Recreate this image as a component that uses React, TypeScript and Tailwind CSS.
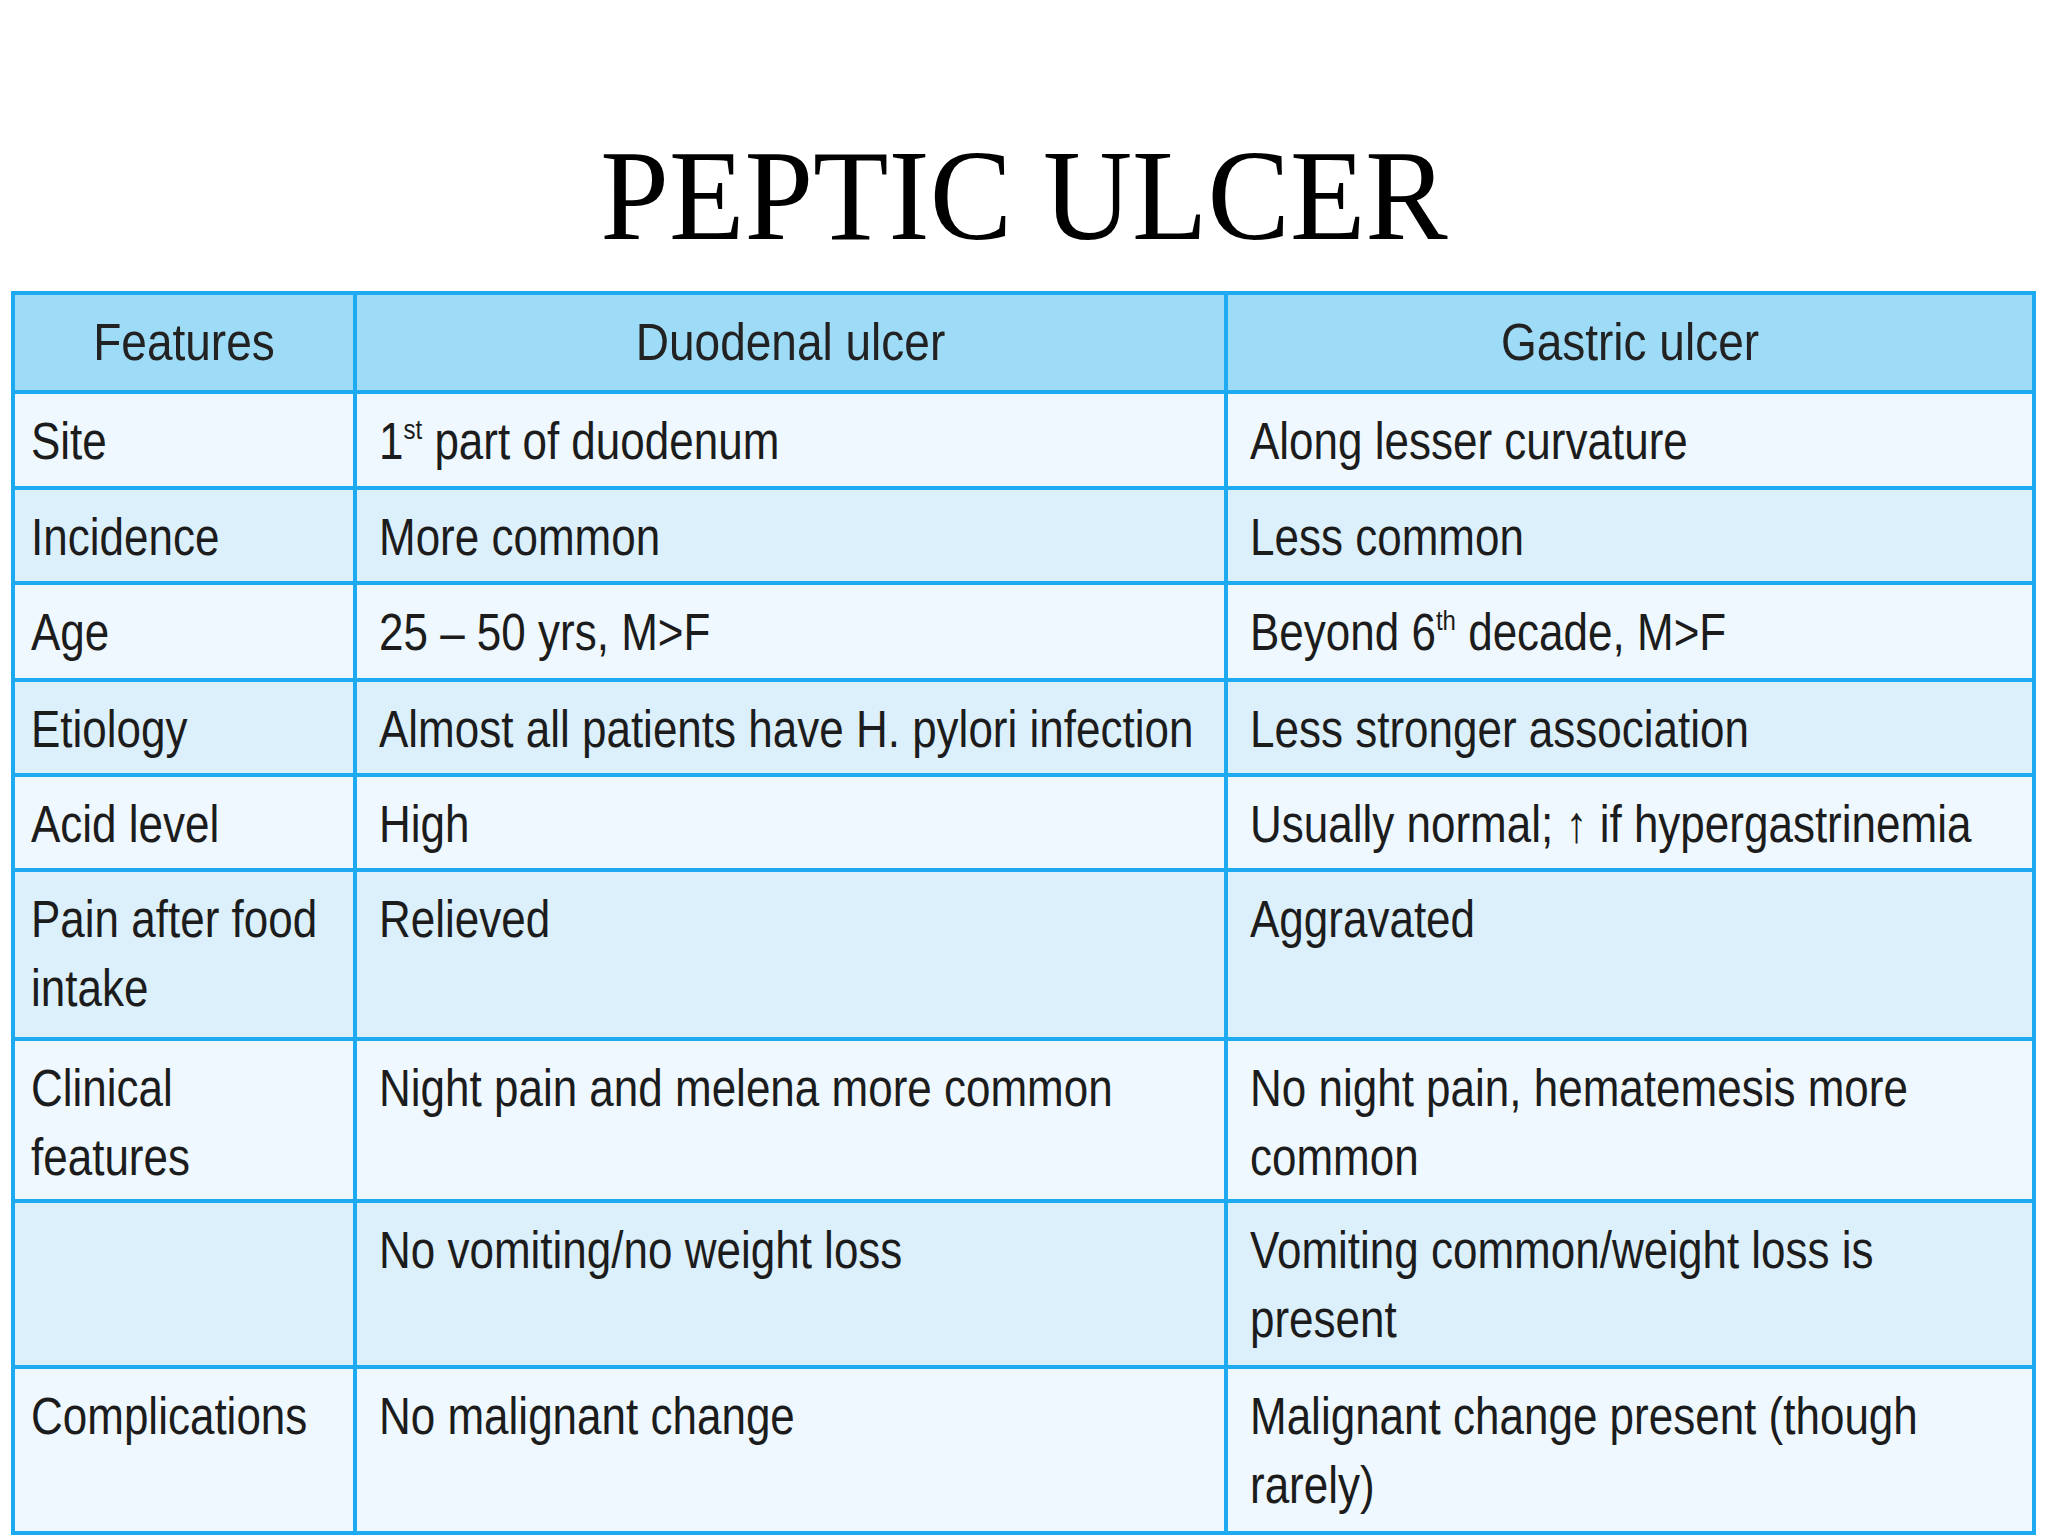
const sup = 'text-[24px] -top-[17px]'

const rows: { feature: string; duodenal: React.ReactNode; gastric: React.ReactNode; h: string; bg: string }[] = [
  {
    feature: 'Site',
    duodenal: (
      <>
        1<sup className={sup}>st</sup> part of duodenum
      </>
    ),
    gastric: 'Along lesser curvature',
    h: 'h-[96px]',
    bg: 'bg-[#eef8fe]',
  },
  { feature: 'Incidence', duodenal: 'More common', gastric: 'Less common', h: 'h-[95px]', bg: 'bg-[#dcf0fb]' },
  {
    feature: 'Age',
    duodenal: '25 – 50 yrs, M>F',
    gastric: (
      <>
        Beyond 6<sup className={sup}>th</sup> decade, M&gt;F
      </>
    ),
    h: 'h-[97px]',
    bg: 'bg-[#eef8fe]',
  },
  {
    feature: 'Etiology',
    duodenal: 'Almost all patients have H. pylori infection',
    gastric: 'Less stronger association',
    h: 'h-[95px]',
    bg: 'bg-[#dcf0fb]',
  },
  {
    feature: 'Acid level',
    duodenal: 'High',
    gastric: 'Usually normal; ↑ if hypergastrinemia',
    h: 'h-[95px]',
    bg: 'bg-[#eef8fe]',
  },
  { feature: 'Pain after food intake', duodenal: 'Relieved', gastric: 'Aggravated', h: 'h-[169px]', bg: 'bg-[#dcf0fb]' },
  {
    feature: 'Clinical features',
    duodenal: 'Night pain and melena more common',
    gastric: 'No night pain, hematemesis more common',
    h: 'h-[162px]',
    bg: 'bg-[#eef8fe]',
  },
  {
    feature: '',
    duodenal: 'No vomiting/no weight loss',
    gastric: 'Vomiting common/weight loss is present',
    h: 'h-[166px]',
    bg: 'bg-[#dcf0fb]',
  },
  {
    feature: 'Complications',
    duodenal: 'No malignant change',
    gastric: 'Malignant change present (though rarely)',
    h: 'h-[166px]',
    bg: 'bg-[#eef8fe]',
  },
]

export default function App() {
  const cell = 'border-[4px] border-[#1eaaf1] align-top pt-[12px] text-left'
  const head = 'border-[4px] border-[#1eaaf1] font-normal text-center align-middle text-[46px] text-[#222]'

  return (
    <div className="w-[2048px] h-[1536px] bg-white overflow-hidden">
      <div className="pt-[130px] flex justify-center">
        <h1 className="font-['Liberation_Serif',serif] text-[130px] leading-none text-black font-normal scale-x-[0.95] whitespace-nowrap">
          PEPTIC ULCER
        </h1>
      </div>

      <div className="mt-[31px] pl-[11px]">
        <table className="w-[2021px] border-collapse table-fixed font-['Liberation_Sans',Arial,sans-serif] text-[44px] leading-[59px] text-[#1c1c1c]">
          <colgroup>
            <col className="w-[342px]" />
            <col className="w-[871px]" />
            <col className="w-[808px]" />
          </colgroup>
          <thead>
            <tr className="h-[99px] bg-[#9ddbf7]">
              <th className={head}>
                <div className="scale-y-[1.12]">Features</div>
              </th>
              <th className={head}>
                <div className="scale-y-[1.12]">Duodenal ulcer</div>
              </th>
              <th className={head}>
                <div className="scale-y-[1.12]">Gastric ulcer</div>
              </th>
            </tr>
          </thead>
          <tbody>
            {rows.map((r, i) => (
              <tr key={i} className={`${r.h} ${r.bg}`}>
                <td className={`${cell} pl-[16px] pr-[14px]`}>
                  <div className="origin-top scale-y-[1.17]">{r.feature}</div>
                </td>
                <td className={`${cell} pl-[22px] pr-[6px]`}>
                  <div className="origin-top scale-y-[1.17]">{r.duodenal}</div>
                </td>
                <td className={`${cell} pl-[22px] pr-[10px]`}>
                  <div className="origin-top scale-y-[1.17]">{r.gastric}</div>
                </td>
              </tr>
            ))}
          </tbody>
        </table>
      </div>
    </div>
  )
}
